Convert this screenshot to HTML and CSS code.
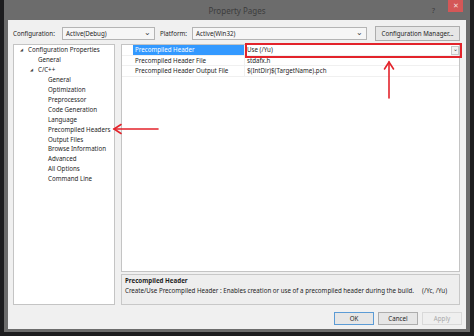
FILE: index.html
```html
<!DOCTYPE html>
<html>
<head>
<link rel="stylesheet" href="styles.css">
</head>
<body>
<div class="window">
    <div class="titlebar">
        <div class="title">Property Pages</div>
        <div class="help">?</div>
        <div class="close">&#x2715;</div>
    </div>
    <div class="client">
        <div class="toprow">
            <span class="lbl">Configuration:</span>
            <div class="combo combo-config"><span>Active(Debug)</span><span class="chev">&#x2304;</span></div>
            <span class="lbl lbl-plat">Platform:</span>
            <div class="combo combo-plat"><span>Active(Win32)</span><span class="chev">&#x2304;</span></div>
            <div class="btn btn-mgr">Configuration Manager...</div>
        </div>

        <div class="main">
            <div class="tree">
                <div class="node l0"><span class="tri">&#x25E2;</span>Configuration Properties</div>
                <div class="node l1">General</div>
                <div class="node l1 exp"><span class="tri">&#x25E2;</span>C/C++</div>
                <div class="node l2">General</div>
                <div class="node l2">Optimization</div>
                <div class="node l2">Preprocessor</div>
                <div class="node l2">Code Generation</div>
                <div class="node l2">Language</div>
                <div class="node l2">Precompiled Headers</div>
                <div class="node l2">Output Files</div>
                <div class="node l2">Browse Information</div>
                <div class="node l2">Advanced</div>
                <div class="node l2">All Options</div>
                <div class="node l2">Command Line</div>
            </div>

            <div class="right">
                <div class="grid">
                    <div class="row">
                        <div class="gutter"></div>
                        <div class="name selected">Precompiled Header</div>
                        <div class="value">Use (/Yu)</div>
                    </div>
                    <div class="row">
                        <div class="gutter"></div>
                        <div class="name">Precompiled Header File</div>
                        <div class="value">stdafx.h</div>
                    </div>
                    <div class="row">
                        <div class="gutter"></div>
                        <div class="name">Precompiled Header Output File</div>
                        <div class="value">$(IntDir)$(TargetName).pch</div>
                    </div>

                    <!-- annotation box round the value combo -->
                    <div class="redbox"><span class="dd">&#x2304;</span></div>
                </div>
                <div class="desc">
                    <div class="desc-title">Precompiled Header</div>
                    <div class="desc-text"><span>Create/Use Precompiled Header : Enables creation or use of a precompiled header during the build.</span><span>(/Yc, /Yu)</span></div>
                </div>
            </div>
        </div>

        <div class="buttons">
            <div class="btn btn-ok">OK</div>
            <div class="btn">Cancel</div>
            <div class="btn disabled">Apply</div>
        </div>
    </div>

    <!-- red annotation arrows -->
    <svg class="arrows" width="474" height="336" viewBox="0 0 474 336">
        <g stroke="#e3232b" stroke-width="1.6" fill="none" stroke-linecap="round">
            <line x1="158" y1="129" x2="114" y2="129"/>
            <polyline points="121,124.5 114,129 121,133.5"/>
            <line x1="389" y1="98" x2="389" y2="62"/>
            <polyline points="384.5,69 389,62 393.5,69"/>
        </g>
    </svg>
</div>
</body>
</html>
```

FILE: styles.css
```css
html, body
{
    margin: 0;
    padding: 0;
}

body
{
    background: #1d1d1f;
    width: 474px;
    height: 336px;
    overflow: hidden;
    font-family: "Noto Sans", "Open Sans", sans-serif;
    font-size: 6.2px;
    color: #1e1e1e;
}

.window
{
    position: relative;
    margin-left: 4px;
    width: 466px;
    height: 332px;
    background: #6c6c6c;
    box-sizing: border-box;
    padding: 0 4px 3px 4px;
    display: flex;
    flex-direction: column;
}

.titlebar
{
    height: 20px;
    display: flex;
    align-items: flex-start;
    position: relative;
}

.title
{
    flex: 1;
    text-align: center;
    line-height: 22px;
    font-size: 8px;
    color: #3c3c3c;
}

.help
{
    position: absolute;
    right: 31px;
    top: 5px;
    font-size: 7.5px;
    color: #3a3a3a;
}

.close
{
    position: absolute;
    right: 3px;
    top: 0;
    width: 15px;
    height: 12px;
    background: #d45757;
    color: #f4dcdc;
    font-size: 6.5px;
    text-align: center;
    line-height: 12px;
}

.client
{
    flex: 1;
    background: #f0f0f0;
    padding: 6px 6px 4px 5px;
    display: flex;
    flex-direction: column;
}

.toprow
{
    height: 15px;
    display: flex;
    align-items: center;
}

.lbl
{
    width: 49px;
}

.lbl-plat
{
    margin-left: 5px;
    width: 32px;
}

.combo
{
    height: 13px;
    box-sizing: border-box;
    border: 1px solid #b4b4b4;
    background: #f6f6f6;
    display: flex;
    align-items: center;
    padding-left: 3px;
    justify-content: space-between;
}

.chev
{
    font-size: 8px;
    line-height: 8px;
    margin-right: 3px;
    margin-top: -4px;
    color: #444;
}

.combo-config
{
    width: 93px;
}

.combo-plat
{
    width: 175px;
}

.btn
{
    height: 13px;
    width: 40px;
    box-sizing: border-box;
    border: 1px solid #adadad;
    background: #e6e6e6;
    display: flex;
    align-items: center;
    justify-content: center;
}

.btn-mgr
{
    margin-left: 8px;
    width: 85px;
    height: 15px;
}

.main
{
    margin-top: 3px;
    height: 261px;
    display: flex;
}

.tree
{
    width: 102px;
    box-sizing: border-box;
    border: 1px solid #c4c4c4;
    background: #fff;
    padding-top: 0.4px;
}

.node
{
    line-height: 9.9px;
    white-space: nowrap;
}

.tri
{
    display: inline-block;
    width: 8px;
    font-size: 4px;
    color: #444;
    vertical-align: 1px;
}

.l0
{
    padding-left: 6px;
}

.l1
{
    padding-left: 24px;
}

.l1.exp
{
    padding-left: 16px;
}

.l2
{
    padding-left: 34px;
}

.right
{
    margin-left: 6px;
    flex: 1;
    display: flex;
    flex-direction: column;
}

.grid
{
    position: relative;
    height: 228px;
    box-sizing: border-box;
    border: 1px solid #c4c4c4;
    background: #fff;
}

.row
{
    display: flex;
    height: 10.5px;
    line-height: 10.5px;
    border-bottom: 1px solid #f0f0f0;
    box-sizing: border-box;
}

.gutter
{
    width: 11px;
}

.name
{
    width: 112px;
    padding-left: 2px;
    box-sizing: border-box;
    white-space: nowrap;
    border-right: 1px solid #f0f0f0;
}

.name.selected
{
    background: #3399ff;
    color: #fff;
}

.value
{
    padding-left: 2px;
    white-space: nowrap;
}

.redbox
{
    position: absolute;
    left: 123px;
    top: -2px;
    width: 217px;
    height: 15px;
    box-sizing: border-box;
    border: 2px solid #e3232b;
}

.dd
{
    position: absolute;
    right: 1px;
    top: 1px;
    width: 8px;
    height: 9px;
    box-sizing: border-box;
    border: 1px solid #c8c8c8;
    background: #f2f2f2;
    font-size: 6px;
    line-height: 5px;
    text-align: center;
    color: #333;
}

.desc
{
    margin-top: 2px;
    flex: 1;
    box-sizing: border-box;
    border: 1px solid #c8c8c8;
    background: #eeeeee;
    padding: 1px 3px 0 3px;
}

.desc-title
{
    font-weight: bold;
    line-height: 10px;
}

.desc-text
{
    display: flex;
    justify-content: space-between;
    line-height: 10px;
    padding-right: 9px;
    white-space: nowrap;
}

.buttons
{
    margin-top: 7px;
    display: flex;
    justify-content: flex-end;
    gap: 4px;
    margin-right: -2px;
}

.btn-ok
{
    border-color: #5b9bd5;
}

.disabled
{
    color: #a8a8a8;
    border-color: #d9d9d9;
    background: #efefef;
}

.arrows
{
    position: absolute;
    left: -4px;
    top: 0;
    pointer-events: none;
}
```
